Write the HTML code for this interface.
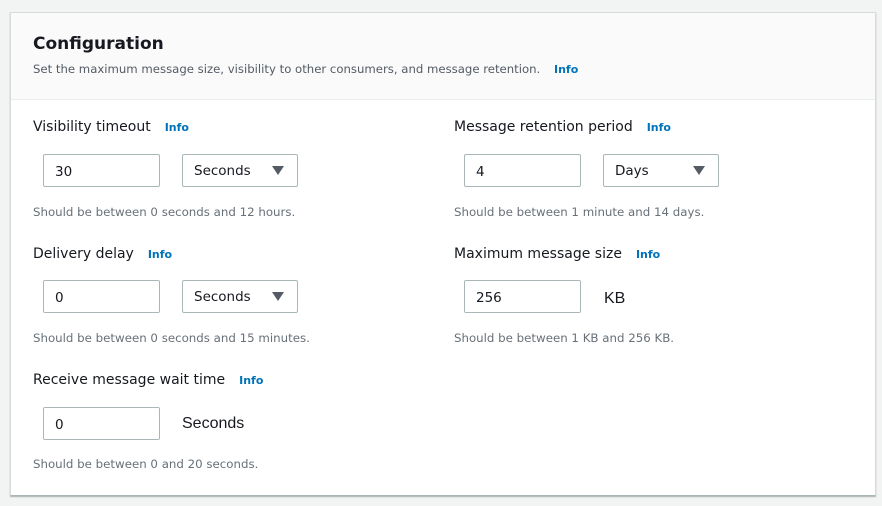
<!DOCTYPE html>
<html><head><style>
body{margin:0;width:882px;height:506px;background:#f2f3f3;font-family:"DejaVu Sans",sans-serif;position:relative;overflow:hidden}
.card{position:absolute;left:10px;top:12px;width:864px;height:482px;background:#fff;border:1px solid #d5dbdb;border-bottom:1px solid #aab7b8;box-shadow:0 1px 1px rgba(0,28,36,.3)}
.hdr{position:absolute;left:0;top:0;width:864px;height:86px;background:#fafafa;border-bottom:1px solid #eaeded}
.a{position:absolute;white-space:nowrap}
h2{position:absolute;left:22px;top:21px;margin:0;font-size:17px;font-weight:bold;color:#16191f}
.sub{left:22px;top:49px;font-size:11.7px;color:#545b64}
.info{font-size:11px;font-weight:bold;color:#0073bb;margin-left:14px}
.lbl{font-size:14px;color:#16191f}
.in{position:absolute;width:117px;height:33px;border:1px solid #aab7b8;border-radius:2px;box-sizing:border-box;font-size:13.5px;color:#16191f;line-height:34px;padding-left:11px}
.sel{position:absolute;width:116px;height:33px;border:1px solid #aab7b8;border-radius:2px;box-sizing:border-box;font-size:13.5px;color:#16191f;line-height:33px;padding-left:11px}
.sel:after{content:"";position:absolute;right:13px;top:11px;border-left:6px solid transparent;border-right:6px solid transparent;border-top:9px solid #545b64}
.help{font-size:11.8px;color:#687078}
.unit{font-size:16px;color:#16191f;font-family:"Liberation Sans",sans-serif}
</style></head><body>
<div class="card">
<div class="hdr"></div>
<h2>Configuration</h2>
<div class="a sub">Set the maximum message size, visibility to other consumers, and message retention. <span class="info" style="margin-left:10px">Info</span></div>

<div class="a lbl" style="left:22px;top:106px">Visibility timeout<span class="info">Info</span></div>
<div class="in" style="left:32px;top:141px">30</div>
<div class="sel" style="left:171px;top:141px">Seconds</div>
<div class="a help" style="left:22px;top:192px">Should be between 0 seconds and 12 hours.</div>

<div class="a lbl" style="left:22px;top:233px">Delivery delay<span class="info">Info</span></div>
<div class="in" style="left:32px;top:267px">0</div>
<div class="sel" style="left:171px;top:267px">Seconds</div>
<div class="a help" style="left:22px;top:318px">Should be between 0 seconds and 15 minutes.</div>

<div class="a lbl" style="left:22px;top:359px">Receive message wait time<span class="info">Info</span></div>
<div class="in" style="left:32px;top:394px">0</div>
<div class="a unit" style="left:171px;top:402px">Seconds</div>
<div class="a help" style="left:22px;top:444px">Should be between 0 and 20 seconds.</div>

<div class="a lbl" style="left:443px;top:106px">Message retention period<span class="info">Info</span></div>
<div class="in" style="left:453px;top:141px">4</div>
<div class="sel" style="left:592px;top:141px">Days</div>
<div class="a help" style="left:443px;top:192px">Should be between 1 minute and 14 days.</div>

<div class="a lbl" style="left:443px;top:233px">Maximum message size<span class="info">Info</span></div>
<div class="in" style="left:453px;top:267px">256</div>
<div class="a unit" style="left:593px;top:277px">KB</div>
<div class="a help" style="left:443px;top:318px">Should be between 1 KB and 256 KB.</div>
</div>
</body></html>
